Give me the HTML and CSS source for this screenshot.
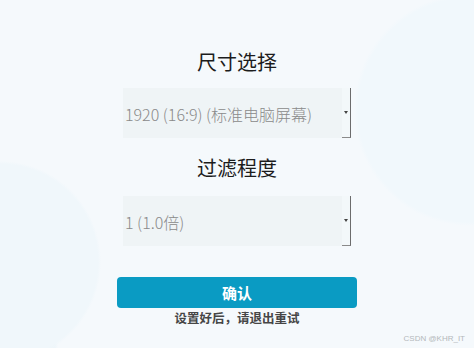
FILE: index.html
```html
<!DOCTYPE html>
<html lang="zh">
<head>
<meta charset="utf-8">
<link rel="stylesheet" href="styles.css">
</head>
<body>
<div class="page">
  <div class="title">尺寸选择</div>
  <div class="select first">
    <span class="value">1920 (16:9) (标准电脑屏幕)</span>
    <span class="drop"><span class="tri"></span></span>
  </div>
  <div class="title second">过滤程度</div>
  <div class="select third">
    <span class="value">1 (1.0倍)</span>
    <span class="drop"><span class="tri"></span></span>
  </div>
  <button class="confirm">确认</button>
  <div class="hint">设置好后，请退出重试</div>
</div>
<div class="mark">CSDN @KHR_IT</div>
</body>
</html>
```
FILE: styles.css
```css
html, body {
  margin: 0;
  padding: 0;
  width: 474px;
  height: 348px;
  overflow: hidden;
}
body {
  position: relative;
  font-family: "Noto Sans CJK SC", "Noto Sans", sans-serif;
  background:
    radial-gradient(circle at 0px 262px, #f0f7fb 0, #f0f7fb 98px, rgba(240,247,251,0) 101px),
    radial-gradient(circle at 25px 345px, #eef6fa 0, #eef6fa 30px, rgba(238,246,250,0) 33px),
    radial-gradient(circle at 470px 110px, #f1f8fc 0, #f1f8fc 112px, rgba(241,248,252,0) 116px),
    #f5f9fc;
}
.page {
  display: flex;
  flex-direction: column;
  align-items: center;
  padding-top: 49px;
}
.title {
  font-size: 20px;
  line-height: 26px;
  height: 26px;
  color: #1c1c1c;
}
.title.second { margin-top: 17px; }
.select {
  width: 228px;
  height: 50px;
  margin-top: 13px;
  display: flex;
  background: #eff4f6;
  box-sizing: border-box;
}
.select.third { margin-top: 15px; }
.value {
  flex: 1;
  padding-left: 2px;
  font-size: 16px;
  font-weight: 300;
  line-height: 52px;
  color: #8a8a8a;
  white-space: nowrap;
}
.drop {
  width: 8px;
  border-right: 1px solid #6c6c6c;
  border-bottom: 1px solid #8a8a8a;
  display: flex;
  align-items: center;
  justify-content: flex-start;
  background: #f3f8fa;
}
.tri {
  width: 0;
  height: 0;
  border-left: 2px solid transparent;
  border-right: 2px solid transparent;
  border-top: 3px solid #444;
  margin-left: 2px;
}
.confirm {
  margin-top: 31px;
  width: 240px;
  height: 31px;
  border: none;
  border-radius: 4px;
  background: #0a9bc3;
  color: #fff;
  font-family: "Noto Sans CJK SC", sans-serif;
  font-weight: 700;
  font-size: 15px;
  padding: 0;
  line-height: 31px;
}
.hint {
  margin-top: 2px;
  font-size: 12.5px;
  line-height: 16px;
  font-weight: 700;
  color: #464646;
}
.mark {
  position: absolute;
  right: 9px;
  bottom: 5px;
  font-family: "Liberation Sans", sans-serif;
  font-size: 8px;
  color: #b4b8bb;
}
```
